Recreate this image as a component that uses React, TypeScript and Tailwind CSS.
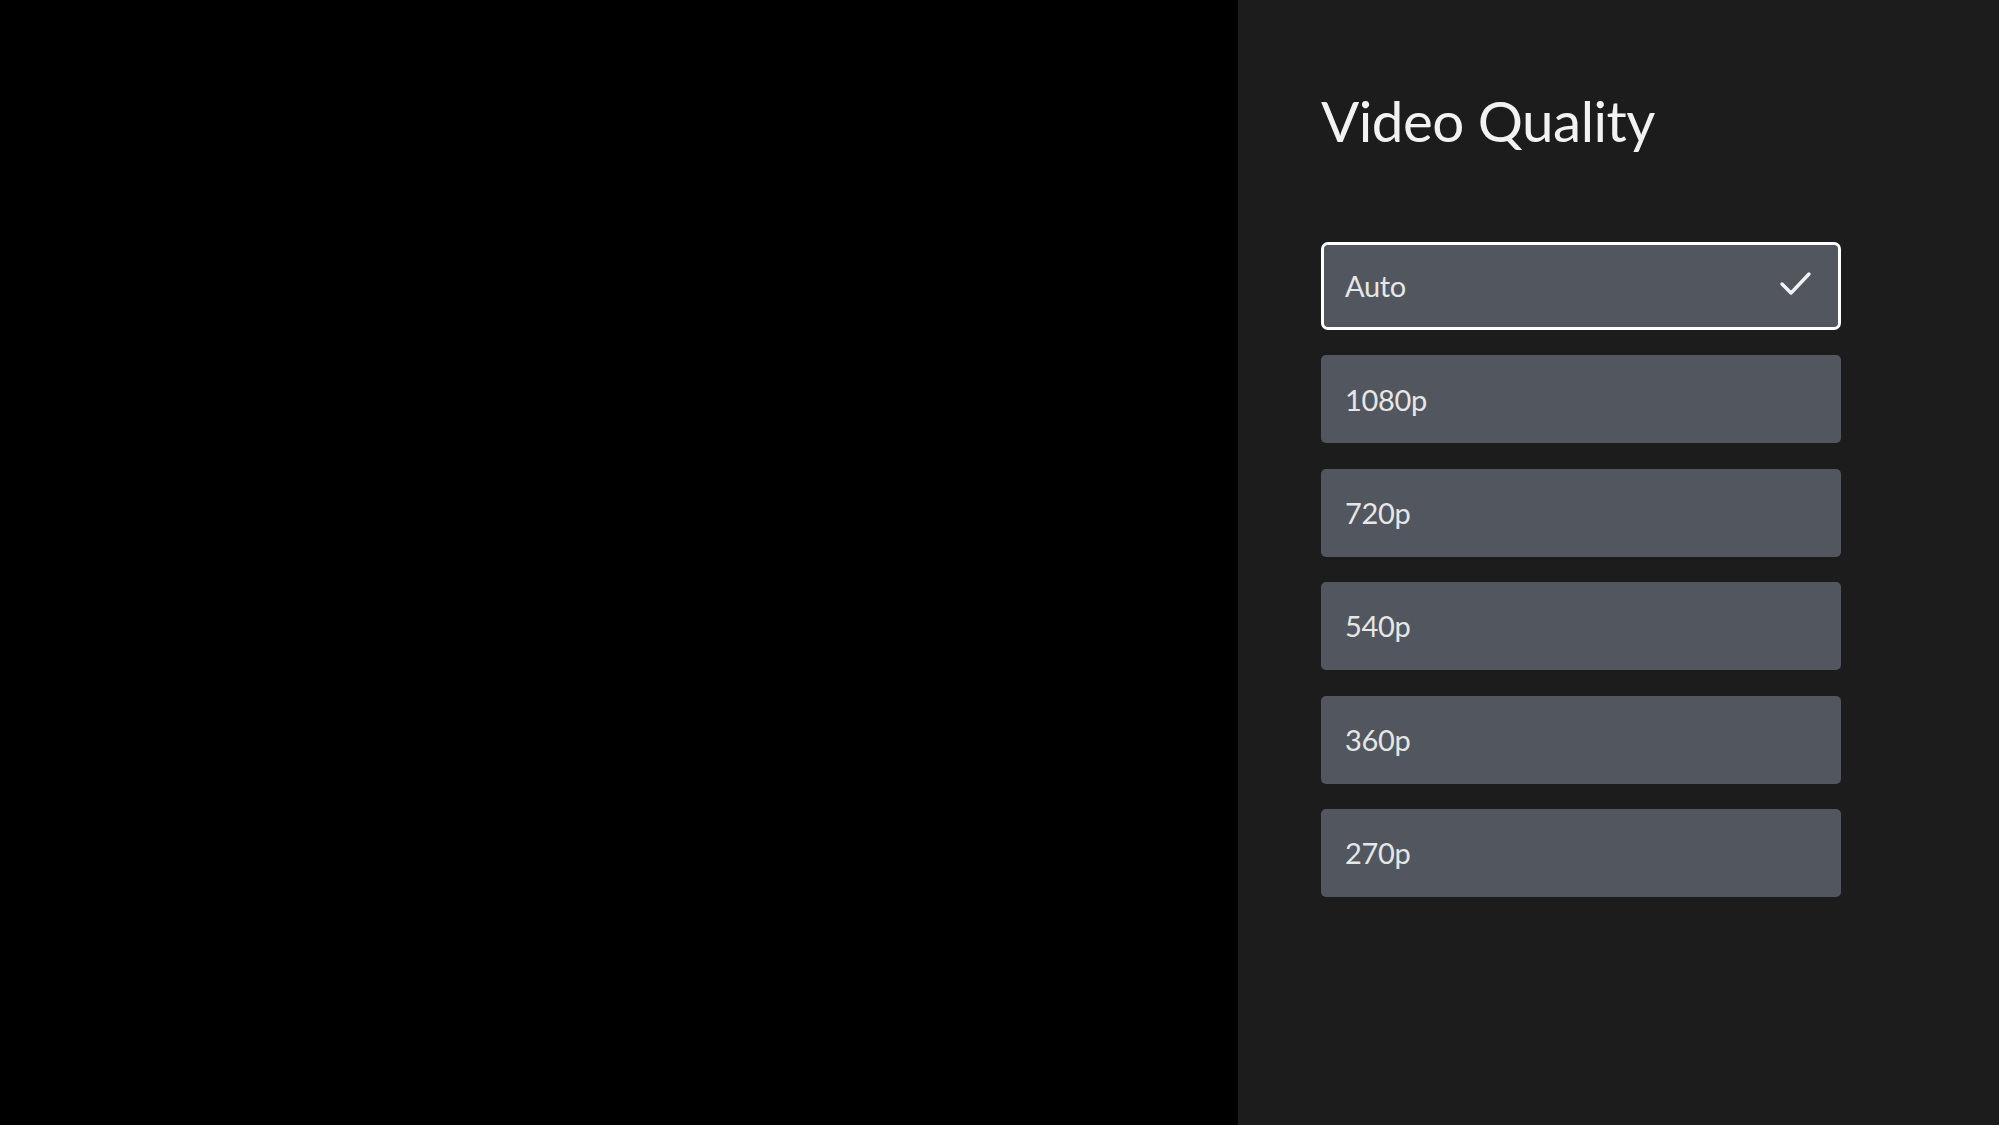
const options = ['Auto', '1080p', '720p', '540p', '360p', '270p'];

function Check() {
  return (
    <svg width="34" height="28" viewBox="0 0 34 28" fill="none" className="-mt-[6px]">
      <path d="M4 15 L13 24 L31 5" stroke="#f2f2f2" strokeWidth="3.4" strokeLinecap="round" strokeLinejoin="round" />
    </svg>
  );
}

export default function App() {
  return (
    <div className="flex w-[1999px] h-[1125px] bg-black font-['Lato',_'Noto_Sans',_sans-serif]">
      {/* Video area */}
      <div className="w-[1238px] h-full bg-black" />

      {/* Settings panel */}
      <div className="flex-1 h-full bg-[#1c1c1c] pl-[83px] pt-[85px]">
        <h1 className="text-[56.5px] leading-[70px] text-[#f2f2f2] font-normal tracking-[-0.5px]">Video Quality</h1>

        <div className="mt-[87px] flex flex-col gap-[25.4px] w-[520px]">
          {options.map((opt, i) => (
            <div
              key={opt}
              className={
                i === 0
                  ? 'h-[88px] rounded-[7px] bg-[#52565e] border-[3px] border-white flex items-center justify-between pl-[21px] pr-[26px]'
                  : 'h-[88px] rounded-[5px] bg-[#52565e] flex items-center px-[24px]'
              }
            >
              <span className="text-[29px] text-[#e6e6e6] tracking-[-0.3px]">{opt}</span>
              {i === 0 && <Check />}
            </div>
          ))}
        </div>
      </div>
    </div>
  );
}
